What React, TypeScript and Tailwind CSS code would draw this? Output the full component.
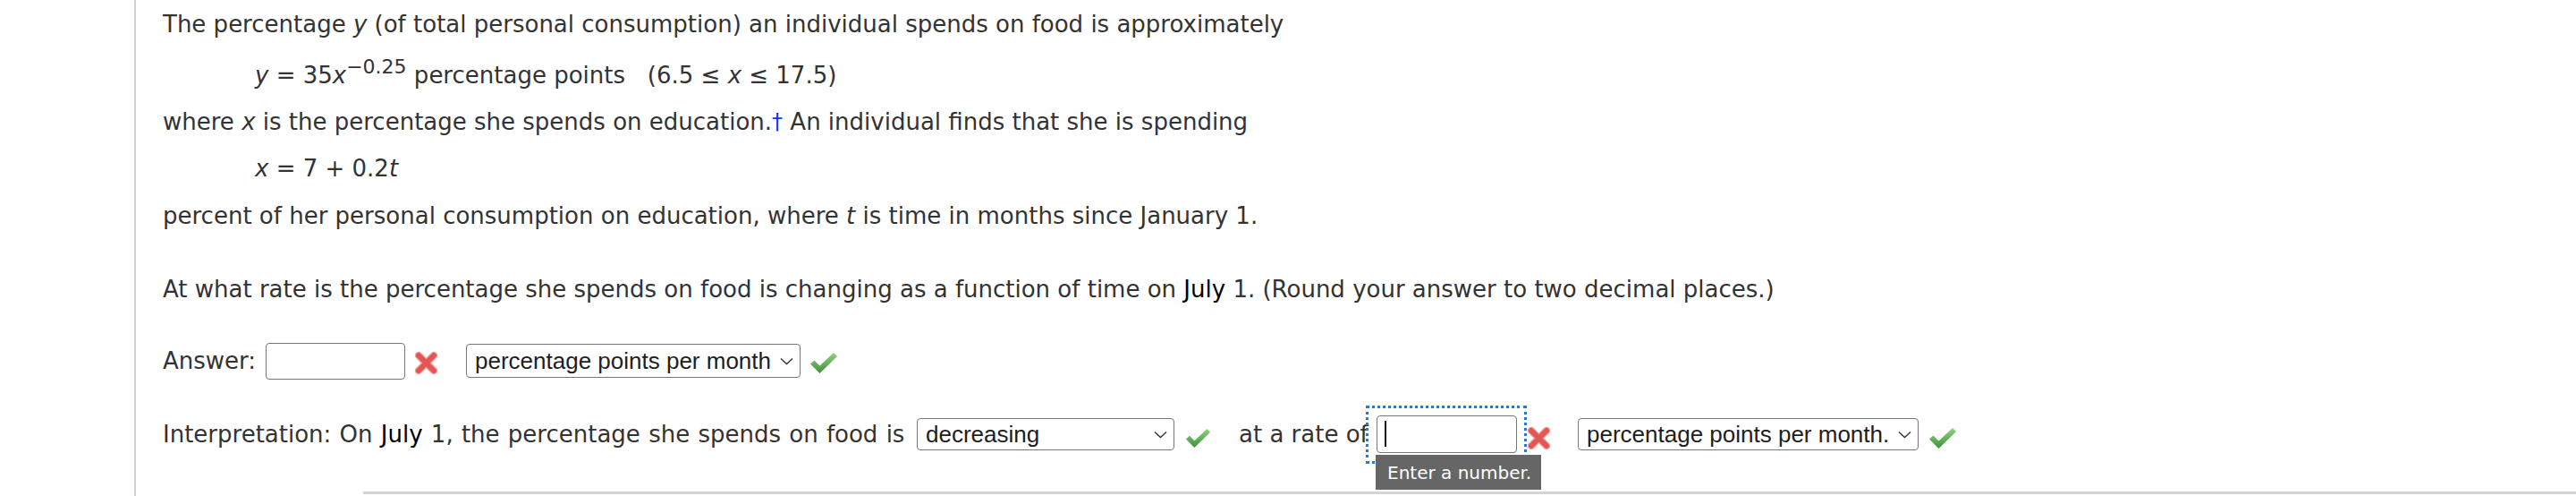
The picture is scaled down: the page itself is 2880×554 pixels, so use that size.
import React from 'react'

function Check({ className = '' }: { className?: string }) {
  return (
    <svg className={className} width="32" height="25" viewBox="0 0 32 25">
      <defs>
        <linearGradient id="chk" x1="0" y1="0" x2="0" y2="1">
          <stop offset="0" stopColor="#8fd27c" />
          <stop offset="1" stopColor="#3e9140" />
        </linearGradient>
      </defs>
      <path d="M1 13.5 L5.5 9.5 L11.5 15.5 L27 1 L31 5 L11.5 24 Z" fill="url(#chk)" />
    </svg>
  )
}

function Cross({ className = '' }: { className?: string }) {
  return (
    <svg className={className} width="27" height="27" viewBox="0 0 27 27">
      <g strokeLinecap="round">
        <line x1="5" y1="5" x2="22" y2="22" stroke="#f2a7a5" strokeWidth="8.5" />
        <line x1="22" y1="5" x2="5" y2="22" stroke="#f2a7a5" strokeWidth="8.5" />
        <line x1="5" y1="5" x2="22" y2="22" stroke="#e25753" strokeWidth="6" />
        <line x1="22" y1="5" x2="5" y2="22" stroke="#e25753" strokeWidth="6" />
      </g>
    </svg>
  )
}

function Chevron() {
  return (
    <svg width="15" height="9" viewBox="0 0 15 9">
      <path d="M1 1.5 L7.5 7.5 L14 1.5" fill="none" stroke="#333" strokeWidth="1.4" />
    </svg>
  )
}

function Select({ label, className }: { label: string; className: string }) {
  return (
    <div
      className={`flex shrink-0 items-center justify-between rounded-[4px] border border-[#767676] bg-white pl-[9px] pr-[7px] font-['Liberation_Sans',Arial,sans-serif] text-[26px] leading-none text-[#1e1e1e] ${className}`}
    >
      <span className="whitespace-nowrap">{label}</span>
      <Chevron />
    </div>
  )
}

export default function App() {
  return (
    <div className="h-[554px] w-full overflow-hidden bg-white font-['DejaVu_Sans',Verdana,sans-serif] text-[26px] leading-[52px] text-[#333]">
      <div className="ml-[150px] flex h-full flex-col border-l-2 border-[#d2d2d2]">
        <div className="pl-[30px] pt-[1px]">
          <div className="h-[57px] whitespace-nowrap">
            The percentage <i>y</i> (of total personal consumption) an individual spends on food is approximately
          </div>
          <div className="h-[52px] whitespace-nowrap pl-[103px]">
            <i>y</i> = 35<i>x</i>
            <span className="relative -top-[11px] text-[22px]">−0.25</span> percentage points{'\u00a0\u00a0'} (6.5 ≤ <i>x</i> ≤ 17.5)
          </div>
          <div className="h-[52px] whitespace-nowrap">
            where <i>x</i> is the percentage she spends on education.
            <span className="relative -top-[1px] text-[24px] text-[#1133ff]">†</span> An individual finds that she is spending
          </div>
          <div className="h-[53px] whitespace-nowrap pl-[103px]">
            <i>x</i> = 7 + 0.2<i>t</i>
          </div>
          <div className="h-[52px] whitespace-nowrap">
            percent of her personal consumption on education, where <i>t</i> is time in months since January 1.
          </div>
          <div className="mt-[30px] h-[52px] whitespace-nowrap">
            At what rate is the percentage she spends on food is changing as a function of time on{' '}
            <span className="text-black">July</span> 1. (Round your answer to two decimal places.)
          </div>

          <div className="mt-[28px] flex h-[52px] items-center">
            <span className="w-[115px] shrink-0">Answer:</span>
            <div className="h-[41px] w-[156px] shrink-0 rounded-[4px] border border-[#767676]" />
            <Cross className="ml-[10px] mt-[4px] shrink-0" />
            <Select label="percentage points per month" className="ml-[31px] h-[38px] w-[374px]" />
            <Check className="ml-[10px] mt-[4px] shrink-0" />
          </div>

          <div className="mt-[30px] flex h-[52px] items-center">
            <span className="w-[843px] shrink-0 whitespace-nowrap [word-spacing:1px]">
              Interpretation: On <span className="text-black">July</span> 1, the percentage she spends on food is
            </span>
            <Select label="decreasing" className="h-[36px] w-[288px]" />
            <Check className="ml-[12px] mt-[9px] w-[29px] shrink-0" />
            <span className="ml-[31px] w-[142px] shrink-0 whitespace-nowrap">at a rate of</span>
            <div className="relative h-[65px] w-[180px] shrink-0 border-[3px] border-dotted border-[#2a78d6] pl-[9px] pt-[8px]">
              <div className="flex h-[42px] w-[157px] items-center rounded-[4px] border border-[#767676] bg-white pl-[8px]">
                <div className="h-[29px] w-[2px] bg-[#111]" />
              </div>
              <div className="absolute left-[8px] top-[52px] flex h-[39px] w-[185px] items-center bg-[#666] pl-[13px] pt-[2px] text-[20px] leading-none whitespace-nowrap text-white">
                Enter a number.
              </div>
            </div>
            <Cross className="mt-[9px] shrink-0" />
            <Select label="percentage points per month." className="ml-[30px] h-[36px] w-[381px]" />
            <Check className="ml-[11px] mt-[9px] shrink-0" />
          </div>
        </div>
        <div className="ml-[254px] mt-[38px] h-[3px] bg-[#d4d4d4]" />
      </div>
    </div>
  )
}
